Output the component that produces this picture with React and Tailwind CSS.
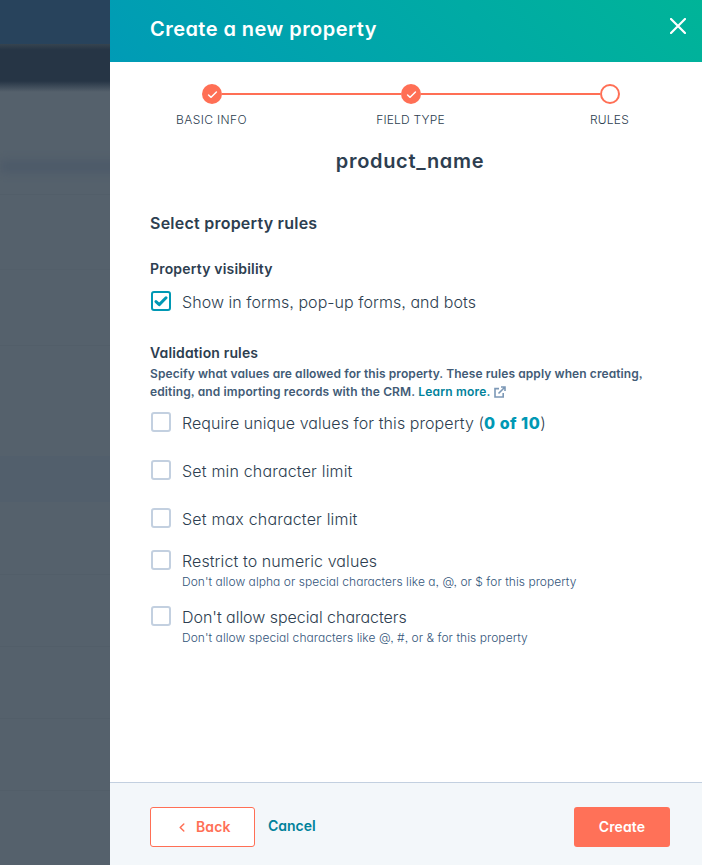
import React from "react";

const steps = [
  { label: "BASIC INFO", done: true, tracking: "tracking-[0.38px]" },
  { label: "FIELD TYPE", done: true, tracking: "tracking-[0.2px]" },
  { label: "RULES", done: false, tracking: "tracking-[0.2px]" },
];

function Check({ className, width }) {
  return (
    <svg viewBox="0 0 12 12" className={className} fill="none" stroke="currentColor" strokeWidth={width} strokeLinecap="round" strokeLinejoin="round">
      <path d="M1.7 6.5 4.5 9.1 10.3 3.2" />
    </svg>
  );
}

function Checkbox({ checked }) {
  return (
    <span className={`mt-[1px] ml-[1px] flex h-5 w-5 shrink-0 items-center justify-center rounded-[3px] border-2 bg-white ${checked ? "border-[#0098b4]" : "border-[#c3d0e0]"}`}>
      {checked && <Check className="h-[14px] w-[14px] text-[#0098b4]" width={2.5} />}
    </span>
  );
}

function Rule({ checked, children, hint, tracking, hintTracking, className }) {
  return (
    <div className={`flex ${className}`}>
      <Checkbox checked={checked} />
      <div className="ml-[11px] whitespace-nowrap">
        <div className={`text-base leading-6 font-light ${tracking}`}>{children}</div>
        {hint && <div className={`text-xs leading-[18px] font-light text-[#33557a] ${hintTracking}`}>{hint}</div>}
      </div>
    </div>
  );
}

function Backdrop() {
  return (
    <div className="flex h-full w-[110px] shrink-0 flex-col overflow-hidden bg-[#55616c]">
      <div className="h-11 bg-[#28435c]" />
      <div className="h-[6px] bg-linear-to-b from-[#36444f] to-[#263545]" />
      <div className="h-[31px] bg-[#263545]" />
      <div className="h-[11px] bg-linear-to-b from-[#263545] to-[#55616c]" />
      <div className="mt-[68px] h-[13px] w-[120px] bg-[#485667] opacity-60 blur-[4px]" />
      <div className="mt-[21px] h-px bg-[#525e69]" />
      <div className="mt-[74px] h-px bg-[#535f6a]" />
      <div className="mt-[75px] h-px bg-[#525e69]" />
      <div className="mt-[110px] h-[46px] bg-[#525f6c]" />
      <div className="mt-[72px] h-px bg-[#525e69]" />
      <div className="mt-[71px] h-px bg-[#525e69]" />
      <div className="mt-[71px] h-px bg-[#525e69]" />
      <div className="mt-[71px] h-px bg-[#525e69]" />
    </div>
  );
}

export default function App() {
  return (
    <div className="flex h-[865px] w-[702px] overflow-hidden font-['Inter','Lato',sans-serif] text-[#2d3e50] [font-feature-settings:'cv11','ss03']">
      <Backdrop />
      <main className="flex h-full w-[592px] flex-col bg-white">
        <header className="flex h-[62px] shrink-0 justify-between bg-linear-45 from-[#009bb6] to-[#00b498] pr-4 pl-10 text-white">
          <h1 className="pt-[14px] text-xl leading-[30px] font-semibold whitespace-nowrap tracking-[0.45px]">Create a new property</h1>
          <svg viewBox="0 0 16 16" className="mt-[18px] h-4 w-4" fill="none" stroke="currentColor" strokeWidth="2.2" strokeLinecap="round">
            <path d="M1 1 15 15M15 1 1 15" />
          </svg>
        </header>

        <section className="flex grow flex-col pl-10">
          <div className="mt-[22px] ml-[52px] flex w-[418px] items-center">
            {steps.map((s, i) => (
              <React.Fragment key={s.label}>
                {i > 0 && <span className="h-[2px] grow bg-[#ff6f55]" />}
                <span className={`flex h-5 w-5 items-center justify-center rounded-full ${s.done ? "bg-[#ff6f55] text-white" : "border-2 border-[#ff6f55]"}`}>
                  {s.done && <Check className="h-[11px] w-[11px]" width={1.6} />}
                </span>
              </React.Fragment>
            ))}
          </div>
          <div className="mt-[7px] -ml-[38px] flex text-xs leading-[18px] font-light">
            {steps.map((s) => (
              <span key={s.label} className={`w-[199px] shrink-0 text-center whitespace-nowrap ${s.tracking}`}>{s.label}</span>
            ))}
          </div>
          <h2 className="mt-[17px] w-[520px] text-center text-xl leading-[30px] font-semibold tracking-[0.68px]">product_name</h2>
          <h3 className="mt-[35px] text-base leading-6 font-semibold whitespace-nowrap tracking-[0.24px]">Select property rules</h3>
          <h4 className="mt-[22px] text-sm leading-6 font-semibold tracking-[0.19px]">Property visibility</h4>
          <Rule checked className="mt-[9px]" tracking="tracking-[0.05px]">Show in forms, pop-up forms, and bots</Rule>
          <h4 className="mt-[27px] text-sm leading-6 font-semibold tracking-[0.14px]">Validation rules</h4>
          <div className="text-xs leading-[18px] font-semibold whitespace-nowrap text-[#425b76]">
            <p className="tracking-[0.085px]">Specify what values are allowed for this property. These rules apply when creating,</p>
            <p className="flex items-center">
              <span className="tracking-[0.13px]">editing, and importing records with the CRM.</span>
              <a className="ml-[3px] tracking-[0.2px] text-[#00829b]">Learn more.</a>
              <svg viewBox="0 0 12 12" className="ml-[3px] h-3 w-3 text-[#7c98b6]" fill="none" stroke="currentColor" strokeWidth="1.6">
                <path d="M5 2.6H1V11H9.2V7M7 1H11V5M11 1 4.5 7.5" />
              </svg>
            </p>
          </div>
          <Rule className="mt-[10px]" tracking="tracking-[0.07px]">
            Require unique values for this property (<b className="font-extrabold tracking-[0.5px] text-[#0098b4]">0 of 10</b>)
          </Rule>
          <Rule className="mt-6" tracking="tracking-[0.18px]">Set min character limit</Rule>
          <Rule className="mt-6" tracking="tracking-[0.18px]">Set max character limit</Rule>
          <Rule className="mt-[18px]" tracking="tracking-[0.09px]" hintTracking="tracking-[0.04px]" hint="Don't allow alpha or special characters like a, @, or $ for this property">Restrict to numeric values</Rule>
          <Rule className="mt-[14px]" tracking="tracking-[-0.04px]" hintTracking="tracking-[0.06px]" hint="Don't allow special characters like @, #, or & for this property">Don't allow special characters</Rule>
        </section>

        <footer className="flex h-[83px] shrink-0 border-t border-[#c3d0e0] bg-[#f3f7fa] pt-6 pr-8 pl-10 text-sm font-semibold">
          <button className="flex h-10 w-[105px] items-center rounded-[3px] border border-[#ff6f55] bg-white pl-[28px] text-[#ff6f55]">
            <svg viewBox="0 0 6 10" className="h-[9px] w-[6px]" fill="none" stroke="currentColor" strokeWidth="1.6" strokeLinecap="round" strokeLinejoin="round">
              <path d="M5 1 1 5 5 9" />
            </svg>
            <span className="ml-[11px] tracking-[0.1px]">Back</span>
          </button>
          <a className="ml-[13px] pt-[7px] leading-6 text-[#00829b]">Cancel</a>
          <button className="ml-auto h-10 w-24 rounded-[3px] bg-[#ff7158] text-white tracking-[0.1px]">Create</button>
        </footer>
      </main>
    </div>
  );
}
